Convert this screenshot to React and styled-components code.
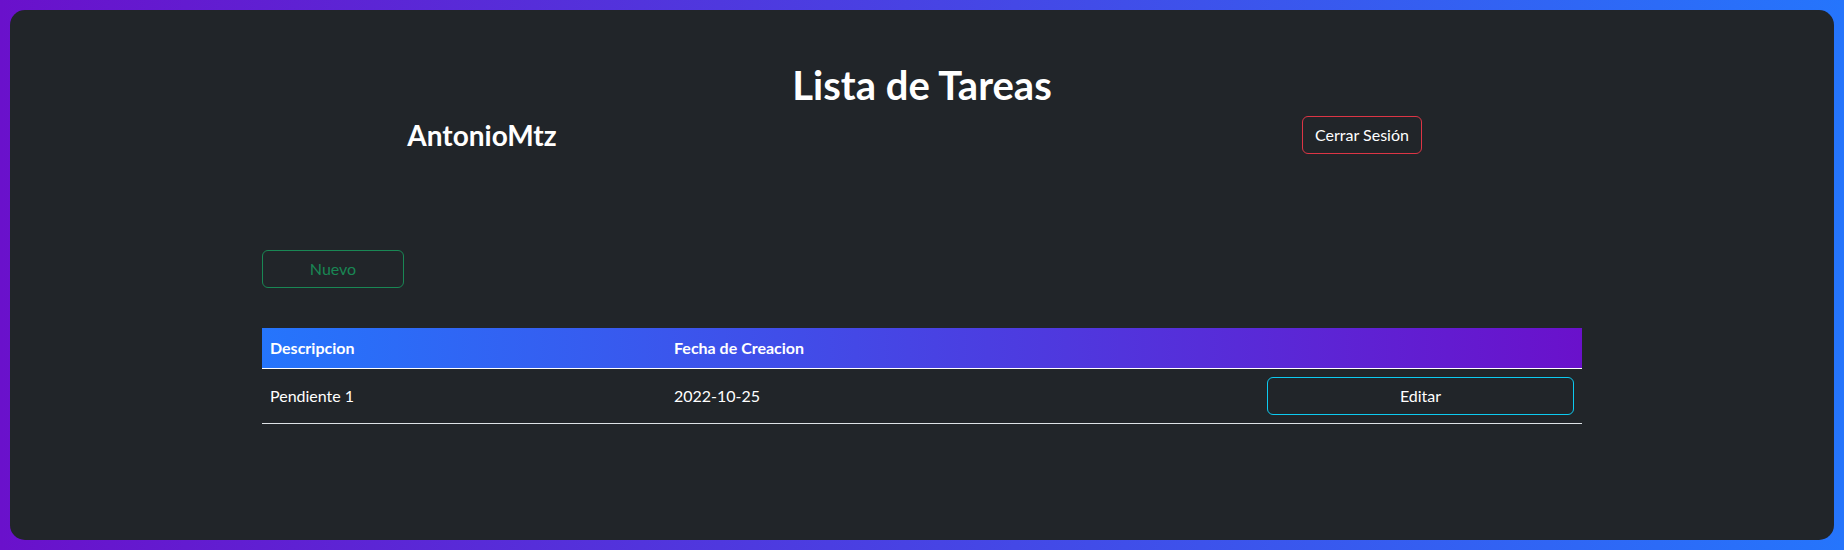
import React from 'react';
import styled, { createGlobalStyle } from 'styled-components';

const GlobalStyle = createGlobalStyle`
  * { box-sizing: border-box; }
  html, body {
    margin: 0;
    height: 100%;
  }
  body {
    font-family: "Segoe UI", Lato, "Noto Sans", sans-serif;
    background: linear-gradient(to right, #6a11cb, #2575fc);
    color: #fff;
  }
`;

const Page = styled.div`
  height: 550px;
  padding: 10px;
`;

const Panel = styled.div`
  height: 100%;
  background: #212529;
  border-radius: 15px;
  padding-top: 51px;
`;

const Container = styled.div`
  width: 1320px;
  margin: 0 auto;
`;

const Title = styled.h1`
  margin: 0;
  font-size: 40px;
  font-weight: 700;
  line-height: 48px;
  text-align: center;
`;

const UserRow = styled.div`
  display: grid;
  grid-template-columns: repeat(3, 1fr);
  align-items: center;
  margin-top: 7px;
`;

const Cell = styled.div`
  display: flex;
  justify-content: center;
`;

const UserName = styled.h3`
  margin: 0;
  font-size: 28px;
  font-weight: 700;
  line-height: 34px;
`;

const OutlineButton = styled.button`
  font-family: inherit;
  font-size: 16px;
  line-height: 24px;
  padding: 6px 12px;
  background: transparent;
  border: 1px solid ${p => p.$color};
  color: ${p => p.$text || '#fff'};
  border-radius: 6px;
  width: ${p => p.$width || 'auto'};
  cursor: pointer;
`;

const Actions = styled.div`
  margin-top: 96px;
`;

const Table = styled.table`
  width: 100%;
  margin-top: 40px;
  border-collapse: collapse;
  table-layout: fixed;
  font-size: 16px;
`;

const HeadRow = styled.tr`
  background: linear-gradient(to right, #2575fc, #6a11cb);
  border-bottom: 1px solid #fff;
`;

const Th = styled.th`
  text-align: left;
  padding: 8px;
  line-height: 24px;
  font-weight: 700;
  width: ${p => p.$w || 'auto'};
`;

const Row = styled.tr`
  border-bottom: 1px solid #dee2e6;
`;

const Td = styled.td`
  padding: 8px;
  line-height: 24px;
  vertical-align: middle;
`;

export default function App() {
  return (
    <>
      <GlobalStyle />
      <Page>
        <Panel>
          <Container>
            <Title>Lista de Tareas</Title>
            <UserRow>
              <Cell><UserName>AntonioMtz</UserName></Cell>
              <Cell />
              <Cell>
                <OutlineButton $color="#dc3545">Cerrar Sesión</OutlineButton>
              </Cell>
            </UserRow>
            <Actions>
              <OutlineButton $color="#198754" $text="#198754" $width="142px">Nuevo</OutlineButton>
            </Actions>
            <Table>
              <thead>
                <HeadRow>
                  <Th $w="404px">Descripcion</Th>
                  <Th $w="593px">Fecha de Creacion</Th>
                  <Th></Th>
                </HeadRow>
              </thead>
              <tbody>
                <Row>
                  <Td>Pendiente 1</Td>
                  <Td>2022-10-25</Td>
                  <Td>
                    <OutlineButton $color="#0dcaf0" $width="100%">Editar</OutlineButton>
                  </Td>
                </Row>
              </tbody>
            </Table>
          </Container>
        </Panel>
      </Page>
    </>
  );
}
